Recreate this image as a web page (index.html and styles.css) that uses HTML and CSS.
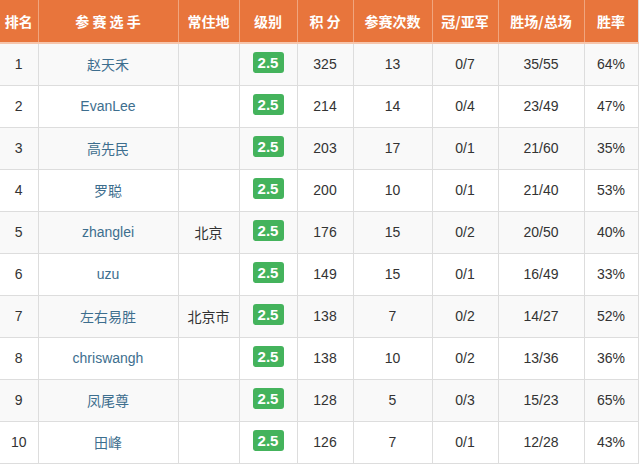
FILE: index.html
```html
<!DOCTYPE html>
<html>
<head>
<meta charset="utf-8">
<link rel="stylesheet" href="styles.css">
</head>
<body>
<table class="rank">
  <colgroup>
    <col class="c1"><col class="c2"><col class="c3"><col class="c4"><col class="c5"><col class="c6"><col class="c7"><col class="c8"><col class="c9">
  </colgroup>
  <thead>
    <tr><th>排名</th><th>参 赛 选 手</th><th>常住地</th><th>级别</th><th>积 分</th><th>参赛次数</th><th>冠/亚军</th><th>胜场/总场</th><th>胜率</th></tr>
  </thead>
  <tbody>
    <tr><td>1</td><td class="name">赵天禾</td><td></td><td><span class="label">2.5</span></td><td>325</td><td>13</td><td>0/7</td><td>35/55</td><td>64%</td></tr>
    <tr><td>2</td><td class="name">EvanLee</td><td></td><td><span class="label">2.5</span></td><td>214</td><td>14</td><td>0/4</td><td>23/49</td><td>47%</td></tr>
    <tr><td>3</td><td class="name">高先民</td><td></td><td><span class="label">2.5</span></td><td>203</td><td>17</td><td>0/1</td><td>21/60</td><td>35%</td></tr>
    <tr><td>4</td><td class="name">罗聪</td><td></td><td><span class="label">2.5</span></td><td>200</td><td>10</td><td>0/1</td><td>21/40</td><td>53%</td></tr>
    <tr><td>5</td><td class="name">zhanglei</td><td>北京</td><td><span class="label">2.5</span></td><td>176</td><td>15</td><td>0/2</td><td>20/50</td><td>40%</td></tr>
    <tr><td>6</td><td class="name">uzu</td><td></td><td><span class="label">2.5</span></td><td>149</td><td>15</td><td>0/1</td><td>16/49</td><td>33%</td></tr>
    <tr><td>7</td><td class="name">左右易胜</td><td>北京市</td><td><span class="label">2.5</span></td><td>138</td><td>7</td><td>0/2</td><td>14/27</td><td>52%</td></tr>
    <tr><td>8</td><td class="name">chriswangh</td><td></td><td><span class="label">2.5</span></td><td>138</td><td>10</td><td>0/2</td><td>13/36</td><td>36%</td></tr>
    <tr><td>9</td><td class="name">凤尾尊</td><td></td><td><span class="label">2.5</span></td><td>128</td><td>5</td><td>0/3</td><td>15/23</td><td>65%</td></tr>
    <tr><td>10</td><td class="name">田峰</td><td></td><td><span class="label">2.5</span></td><td>126</td><td>7</td><td>0/1</td><td>12/28</td><td>43%</td></tr>
  </tbody>
</table>
</body>
</html>
```
FILE: styles.css
```css
html, body {
  margin: 0;
  padding: 0;
  background: #fff;
}
body {
  font-family: "Liberation Sans", Arial, "Noto Sans CJK SC", sans-serif;
  font-size: 14px;
  color: #333;
}
.rank {
  width: 638px;
  border-collapse: collapse;
  table-layout: fixed;
  border-right: 1px solid #ddd;
}
.c1 { width: 38px; }
.c2 { width: 140px; }
.c3 { width: 61px; }
.c4 { width: 58px; }
.c5 { width: 56px; }
.c6 { width: 79px; }
.c7 { width: 66px; }
.c8 { width: 86px; }
.c9 { width: 54px; }
.rank th {
  height: 43px;
  padding: 0;
  background: #e8753c;
  color: #fff;
  font-weight: bold;
  font-size: 14px;
  font-family: "Noto Sans CJK SC", "Liberation Sans", sans-serif;
  text-align: center;
  border-left: 1px solid #f0a57e;
  border-bottom: 2px solid #f6c6ad;
  box-sizing: border-box;
}
.rank th:first-child { border-left: none; }
.rank td {
  height: 42px;
  padding: 0;
  text-align: center;
  vertical-align: middle;
  border-top: 1px solid #ddd;
  border-left: 1px solid #ddd;
  box-sizing: border-box;
}
.rank td:first-child { border-left: none; }
.rank tbody tr:nth-child(odd) td { background: #f9f9f9; }
.rank tbody tr:last-child td { border-bottom: 1px solid #ddd; }
.rank td.name {
  color: #3d6e8e;
  font-family: "Liberation Sans", "Noto Sans CJK SC", sans-serif;
}
.label {
  display: inline-block;
  width: 31px;
  height: 21px;
  line-height: 21px;
  background: #44b35c;
  color: #fff;
  font-weight: bold;
  font-size: 15px;
  border-radius: 3px;
  text-align: center;
  position: relative;
  top: -2px;
}
```
